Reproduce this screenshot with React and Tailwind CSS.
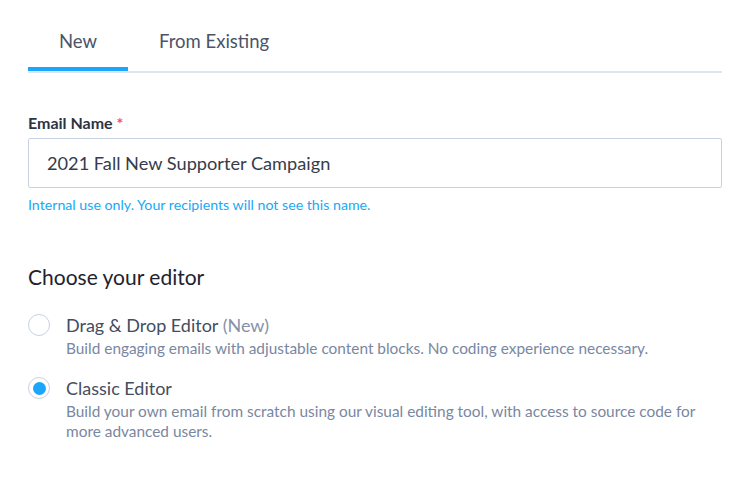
import { useState } from 'react';

const tabs = ['New', 'From Existing'];

const editors = [
  {
    id: 'dnd',
    title: 'Drag & Drop Editor',
    tag: '(New)',
    description: 'Build engaging emails with adjustable content blocks. No coding experience necessary.',
  },
  {
    id: 'classic',
    title: 'Classic Editor',
    description:
      'Build your own email from scratch using our visual editing tool, with access to source code for more advanced users.',
  },
];

const App = () => {
  const [activeTab, setActiveTab] = useState('New');
  const [name, setName] = useState('2021 Fall New Supporter Campaign');
  const [editor, setEditor] = useState('classic');

  return (
    <div className="w-[750px] h-[480px] bg-white px-[28px] font-['Lato','Liberation_Sans',sans-serif]">
      <div className="flex border-b-2 border-[#dfe5ef]">
        {tabs.map((tab) => (
          <button
            key={tab}
            onClick={() => setActiveTab(tab)}
            className="flex flex-col px-[31px] pt-[29px] text-[18.5px] leading-[24px] text-[#4b5468]"
          >
            <span>{tab}</span>
            <span
              className={`mt-[14px] h-[4px] -mx-[31px] ${
                activeTab === tab ? 'bg-[#1ba6fb]' : 'bg-transparent'
              }`}
            />
          </button>
        ))}
      </div>

      <div className="mt-[40px]">
        <label className="block text-[16px] leading-[20px] font-bold text-[#2d3444]">
          Email Name <span className="text-[#f0515b]">*</span>
        </label>
        <input
          value={name}
          onChange={(e) => setName(e.target.value)}
          className="mt-[5px] block w-full h-[50px] rounded-[2px] border border-[#c8d2e3] px-[18px] text-[18.2px] text-[#353c4c] outline-none"
        />
        <p className="mt-[7px] text-[14.2px] leading-[20px] text-[#1aa8f4]">
          Internal use only. Your recipients will not see this name.
        </p>
      </div>

      <h2 className="mt-[48px] text-[21px] leading-[28px] text-[#1e2330]">Choose your editor</h2>

      <div className="mt-[22px] flex flex-col gap-[18px]">
        {editors.map((item) => (
          <label key={item.id} className="flex gap-[16px] cursor-pointer" onClick={() => setEditor(item.id)}>
            <span className="mt-[1px] flex h-[22px] w-[22px] shrink-0 items-center justify-center rounded-full border border-[#c8d2e3] bg-white">
              {editor === item.id && <span className="h-[13px] w-[13px] rounded-full bg-[#1ba6fb]" />}
            </span>
            <div>
              <div className="text-[18px] leading-[24px] text-[#454d60]">
                {item.title}
                {item.tag && <span className="text-[#8591a8]"> {item.tag}</span>}
              </div>
              <p className="mt-[1px] text-[15.4px] leading-[20px] text-[#7987a2]">{item.description}</p>
            </div>
          </label>
        ))}
      </div>
    </div>
  );
};

export default App;
